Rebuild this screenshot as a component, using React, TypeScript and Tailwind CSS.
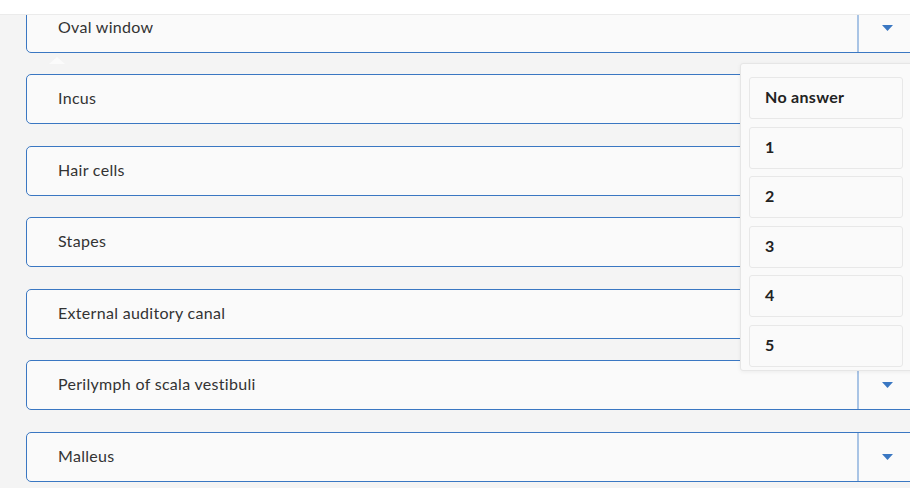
const rows = [
  'Oval window',
  'Incus',
  'Hair cells',
  'Stapes',
  'External auditory canal',
  'Perilymph of scala vestibuli',
  'Malleus',
];

const options = ['No answer', '1', '2', '3', '4', '5'];

const Caret = () => (
  <svg width="11" height="6" viewBox="0 0 11 6" className="block">
    <path d="M0 0 L11 0 L5.5 6 Z" fill="#3a77c2" />
  </svg>
);

const MatchRow = ({ label }: { label: string }) => (
  <div className="flex h-[50px] w-[894px] shrink-0 items-stretch rounded-[5px] border border-[#3a77c2] bg-[#fafafa]">
    <div className="flex flex-1 items-center pb-[2px] pl-[31px] text-[16px] tracking-[0.3px] text-[#333333]">
      {label}
    </div>
    <div className="w-[2px] bg-[#a9c4e5]" />
    <div className="flex w-[60px] items-center pl-[23px]">
      <Caret />
    </div>
  </div>
);

export default function App() {
  return (
    <div
      className="relative h-[488px] w-[910px] overflow-hidden bg-[#f4f4f4]"
      style={{ fontFamily: 'Lato, "Open Sans", sans-serif' }}
    >
      <div className="flex flex-col gap-[21.5px] pl-[26px] pt-[2.5px]">
        {rows.map((r) => (
          <MatchRow key={r} label={r} />
        ))}
      </div>

      <div className="absolute left-0 top-0 h-[15px] w-full border-b border-[#ebebeb] bg-white" />

      <svg width="16" height="7" viewBox="0 0 16 7" className="absolute left-[49px] top-[57px]">
        <path d="M0 7 L8 0 L16 7 Z" fill="#fbfbfb" />
      </svg>

      <div className="absolute left-[740px] top-[63px] h-[308px] w-[180px] rounded-[3px] border border-[#e6e6e6] bg-[#fafafa] pl-[8px] pt-[13px] shadow-[0_1px_4px_rgba(0,0,0,0.06)]">
        <div className="flex w-[154px] flex-col gap-[7.5px]">
          {options.map((o) => (
            <div
              key={o}
              className="flex h-[42px] items-center rounded-[3px] border border-[#e8e8e8] bg-[#fafafa] pb-[2px] pl-[15px] text-[16px] font-bold tracking-[0.3px] text-[#222222]"
            >
              {o}
            </div>
          ))}
        </div>
      </div>
    </div>
  );
}
